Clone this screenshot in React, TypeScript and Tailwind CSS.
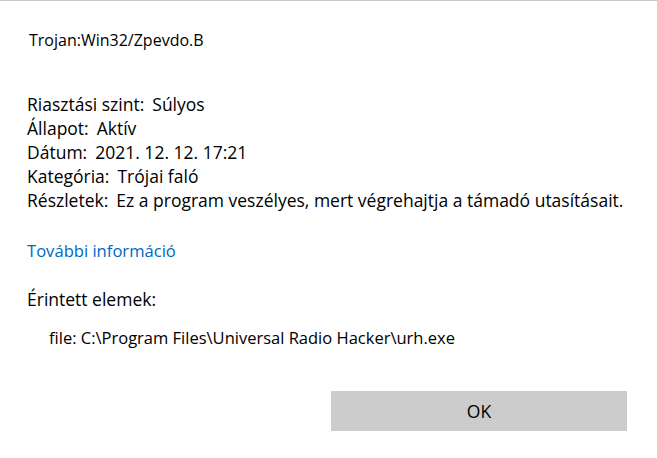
const rows = [
  ['Riasztási szint:', 'Súlyos'],
  ['Állapot:', 'Aktív'],
  ['Dátum:', '2021. 12. 12. 17:21'],
  ['Kategória:', 'Trójai faló'],
  ['Részletek:', 'Ez a program veszélyes, mert végrehajtja a támadó utasításait.'],
];

export default function App() {
  return (
    <div
      className="w-[657px] h-[458px] bg-white border-t border-[#c8c8c8] text-[17.5px] text-black flex flex-col overflow-hidden"
      style={{ fontFamily: '"Open Sans", "Noto Sans", sans-serif' }}
    >
      <div className="pl-[29px] pt-[27px] text-[16px] leading-[24px]">Trojan:Win32/Zpevdo.B</div>
      <div className="pl-[27px] pt-[40px] flex flex-col leading-[24px]">
        {rows.map(([label, value]) => (
          <div key={label} className="flex whitespace-nowrap">
            <span>{label}</span>
            <span className="ml-[8px]">{value}</span>
          </div>
        ))}
      </div>
      <div className="pl-[27px] pt-[27px] leading-[24px] text-[16.6px] text-[#0067c0]">További információ</div>
      <div className="pl-[27px] pt-[24px] leading-[24px]">Érintett elemek:</div>
      <div className="pl-[49px] pt-[15px] leading-[24px] text-[16.5px] whitespace-nowrap">
        file: C:\Program Files\Universal Radio Hacker\urh.exe
      </div>
      <div className="flex justify-end pr-[30px] pt-[41px]">
        <button className="w-[296px] h-[40px] bg-[#cccccc] text-[17.5px]">OK</button>
      </div>
    </div>
  );
}
